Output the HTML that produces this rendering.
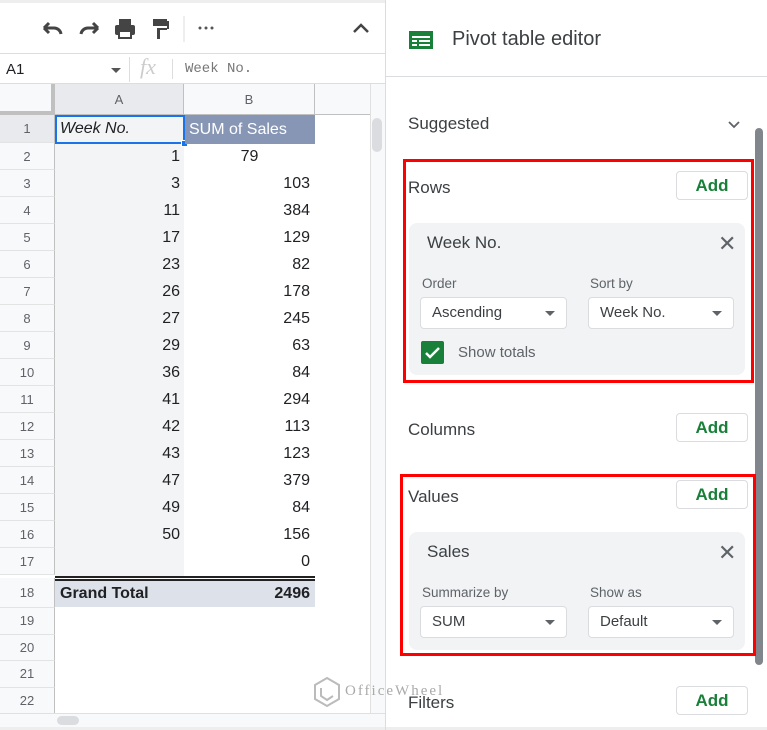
<!DOCTYPE html>
<html><head><meta charset="utf-8"><style>
*{box-sizing:border-box;margin:0;padding:0}
body{width:767px;height:730px;position:relative;overflow:hidden;background:#fff;font-family:"Liberation Sans",Arial,sans-serif;color:#202124}
.a{position:absolute}
.rh{position:absolute;left:0;width:55px;text-align:center;font-size:13px;color:#5f6368;border-bottom:1px solid #e2e3e3;background:#f8f9fa;border-right:1px solid #c0c0c0}
.cell{position:absolute;font-size:16px;display:flex;align-items:center}
.btn{position:absolute;width:72px;height:29px;border:1px solid #dadce0;border-radius:4px;color:#188038;font-size:17px;font-weight:bold;text-align:center;line-height:27px;background:#fff}
.lbl{position:absolute;font-size:17px;color:#3c4043}
.card{position:absolute;left:409px;width:336px;background:#f1f3f4;border-radius:8px}
.sel{position:absolute;height:32px;background:#fff;border:1px solid #dadce0;border-radius:4px;font-size:15px;color:#3c4043;padding-left:11px;line-height:30px}
.sel:after{content:"";position:absolute;right:11px;top:13px;border:5px solid transparent;border-top:5px solid #5f6368}
.sm{position:absolute;font-size:13.5px;color:#5f6368}
.x{position:absolute;font-size:22px;color:#5f6368;font-weight:300}
</style></head><body>
<div class="a" style="left:0;top:0;width:385px;height:3px;background:#eee"></div>
<svg class="a" style="left:38px;top:14px" width="340" height="30" viewBox="0 0 340 30">
<path d="M6 14 l5-5 M6 14 l5 5 M6 14 h10 a7 7 0 0 1 7 6" stroke="#444" stroke-width="3" fill="none"/>
<path d="M60 14 l-5-5 M60 14 l-5 5 M60 14 h-10 a7 7 0 0 0 -7 6" stroke="#444" stroke-width="3" fill="none"/>
<rect x="77" y="11" width="20" height="10" rx="2" fill="#444"/><rect x="81" y="5" width="12" height="6" fill="#444"/><rect x="81" y="17" width="12" height="7" fill="#fff" stroke="#444" stroke-width="2"/>
<rect x="115" y="5" width="14" height="7" fill="#444"/><rect x="129" y="7" width="2" height="8" fill="#444"/><rect x="119" y="14" width="10" height="2" fill="#444"/><rect x="119" y="14" width="3" height="11" fill="#444"/>
<line x1="146" y1="2" x2="146" y2="28" stroke="#ddd"/>
<circle cx="162" cy="14" r="1.5" fill="#555"/><circle cx="168" cy="14" r="1.5" fill="#555"/><circle cx="174" cy="14" r="1.5" fill="#555"/>
<path d="M316 18 l7-7 l7 7" stroke="#444" stroke-width="2.5" fill="none"/>
</svg>
<div class="a" style="left:0;top:53px;width:385px;height:1px;background:#ddd"></div>
<div class="a" style="left:6px;top:61px;font-size:15px">A1</div>
<div class="a" style="left:111px;top:68px;border:5px solid transparent;border-top:5px solid #555"></div>
<div class="a" style="left:129px;top:57px;width:1px;height:25px;background:#ddd"></div>
<div class="a" style="left:140px;top:54px;font-size:22px;font-style:italic;color:#ccc;font-family:'Liberation Serif',serif">fx</div>
<div class="a" style="left:172px;top:59px;width:1px;height:20px;background:#ddd"></div>
<div class="a" style="left:185px;top:61px;font-size:14px;color:#777;font-family:'Liberation Mono',monospace">Week No.</div>
<div class="a" style="left:0;top:83px;width:385px;height:1px;background:#ddd"></div>
<div class="a" style="left:0;top:84px;width:55px;height:31px;background:#f8f9fa;border-right:4px solid #c0c0c0;border-bottom:4px solid #c0c0c0"></div>
<div class="a" style="left:55px;top:84px;width:129px;height:31px;background:#e8eaed;border-right:1px solid #c0c0c0;border-bottom:1px solid #c0c0c0;text-align:center;line-height:31px;font-size:13px;color:#5f6368">A</div>
<div class="a" style="left:184px;top:84px;width:131px;height:31px;background:#f8f9fa;border-right:1px solid #c0c0c0;border-bottom:1px solid #c0c0c0;text-align:center;line-height:31px;font-size:13px;color:#5f6368">B</div>
<div class="a" style="left:315px;top:84px;width:55px;height:31px;background:#f8f9fa;border-bottom:1px solid #c0c0c0"></div>
<div class="a" style="left:370px;top:84px;width:15px;height:630px;background:#f8f9fa;border-left:1px solid #e0e0e0"></div>
<div class="a" style="left:372px;top:118px;width:10px;height:34px;border-radius:5px;background:#dadce0"></div>
<div class="a" style="left:55px;top:115px;width:129px;height:462px;background:#f3f4f6"></div>
<div id="rows"></div>
<div class="a" style="left:55px;top:115px;width:130px;height:29px;border:2px solid #1a73e8;background:#f3f4f6"></div>
<div class="a" style="left:181px;top:140px;width:7px;height:7px;background:#1a73e8;border:1px solid #fff"></div>
<div class="cell" style="left:60px;top:115px;height:28px;font-style:italic">Week No.</div>
<div class="cell" style="left:185px;top:115px;width:130px;height:29px;background:#8796b5;color:#fff;padding-left:4px">SUM of Sales</div>
<div class="a" style="left:55px;top:576px;width:260px;height:5px;border-top:2px solid #222;border-bottom:2px solid #222"></div>
<div class="cell" style="left:55px;top:581px;width:260px;height:26px;background:#dde2ea;font-weight:bold;justify-content:space-between;padding:0 5px">
<span>Grand Total</span><span>2496</span></div>
<div class="a" style="left:0;top:713px;width:385px;height:14px;background:#f8f9fa;border-top:1px solid #e0e0e0"></div>
<div class="a" style="left:57px;top:716px;width:22px;height:9px;border-radius:5px;background:#dadce0"></div>
<div class="a" style="left:0;top:727px;width:767px;height:3px;background:#eee"></div>
<div class="a" style="left:385px;top:0;width:1px;height:730px;background:#dadce0"></div>
<svg class="a" style="left:409px;top:31px" width="24" height="18"><rect width="24" height="18" fill="#188038"/><g fill="#fff"><rect x="3" y="5" width="18" height="2"/><rect x="3" y="9" width="5" height="2"/><rect x="10" y="9" width="11" height="2"/><rect x="3" y="13" width="5" height="2"/><rect x="10" y="13" width="11" height="2"/></g></svg>
<div class="a" style="left:452px;top:28px;font-size:20px;color:#3c4043">Pivot table editor</div>
<div class="a" style="left:386px;top:76px;width:381px;height:1px;background:#dadce0"></div>
<div class="lbl" style="left:408px;top:114px">Suggested</div>
<svg class="a" style="left:727px;top:120px" width="14" height="10"><path d="M2 2l5 5 5-5" stroke="#5f6368" stroke-width="1.8" fill="none"/></svg>
<div class="a" style="left:755px;top:128px;width:8px;height:537px;border-radius:4px;background:#80868b"></div>
<div class="a" style="left:403px;top:159px;width:351px;height:224px;border:3px solid #f00"></div>
<div class="lbl" style="left:408px;top:178px">Rows</div>
<div class="btn" style="left:676px;top:171px">Add</div>
<div class="card" style="top:223px;height:152px"></div>
<div class="lbl" style="left:427px;top:233px;font-size:17px;color:#3c4043">Week No.</div>
<div class="x" style="left:718px;top:231px">✕</div>
<div class="sm" style="left:422px;top:276px">Order</div>
<div class="sm" style="left:590px;top:276px">Sort by</div>
<div class="sel" style="left:420px;top:297px;width:147px">Ascending</div>
<div class="sel" style="left:588px;top:297px;width:146px">Week No.</div>
<div class="a" style="left:421px;top:341px;width:23px;height:23px;background:#188038;border-radius:2px"></div>
<svg class="a" style="left:421px;top:341px" width="23" height="23"><path d="M5 12l4 4 9-9" stroke="#fff" stroke-width="2.5" fill="none"/></svg>
<div class="a" style="left:458px;top:344px;font-size:15px;color:#5f6368">Show totals</div>
<div class="lbl" style="left:408px;top:420px">Columns</div>
<div class="btn" style="left:676px;top:413px">Add</div>
<div class="a" style="left:400px;top:474px;width:356px;height:182px;border:3px solid #f00"></div>
<div class="lbl" style="left:408px;top:487px">Values</div>
<div class="btn" style="left:676px;top:480px">Add</div>
<div class="card" style="top:532px;height:118px"></div>
<div class="lbl" style="left:427px;top:542px">Sales</div>
<div class="x" style="left:718px;top:540px">✕</div>
<div class="sm" style="left:422px;top:585px">Summarize by</div>
<div class="sm" style="left:590px;top:585px">Show as</div>
<div class="sel" style="left:420px;top:606px;width:147px">SUM</div>
<div class="sel" style="left:588px;top:606px;width:146px">Default</div>
<div class="lbl" style="left:408px;top:693px">Filters</div>
<div class="btn" style="left:676px;top:686px">Add</div>
<div class="a" style="left:345px;top:683px;font-size:15px;color:#aaa;letter-spacing:2px;font-family:'Liberation Serif',serif">OfficeWheel</div>
<svg class="a" style="left:312px;top:676px" width="30" height="32"><path d="M15 2l12 7v14l-12 7-12-7V9z" stroke="#bbb" stroke-width="2" fill="none"/><path d="M9 12v8l6 4 6-4" stroke="#bbb" stroke-width="2" fill="none"/></svg>
<script>
(function(){
var v=[["",""],["1","79"],["3","103"],["11","384"],["17","129"],["23","82"],["26","178"],["27","245"],["29","63"],["36","84"],["41","294"],["42","113"],["43","123"],["47","379"],["49","84"],["50","156"],["","0"]];
var h='';
function rt(n){if(n==1)return 115;if(n<=17)return 143+(n-2)*27;if(n==18)return 578;return 608+(n-19)*26.5;}
function ht(n){if(n==1)return 28;if(n<=17)return 27;if(n==18)return 30;return 26.5;}
for(var n=1;n<=22;n++){var t=rt(n),hh=ht(n);
h+='<div class="rh" style="top:'+t+'px;height:'+hh+'px;line-height:'+hh+'px;'+(n==1?'background:#e8eaed':'')+'">'+n+'</div>';
if(n>=2&&n<=17){var r=v[n-1];
h+='<div class="cell" style="left:55px;top:'+t+'px;height:'+hh+'px;width:129px;justify-content:flex-end;padding-right:4px">'+r[0]+'</div>';
h+='<div class="cell" style="left:184px;top:'+t+'px;height:'+hh+'px;width:131px;'+(n==2?'justify-content:center;padding-right:0':'justify-content:flex-end;padding-right:5px')+'">'+r[1]+'</div>';}}
document.getElementById('rows').outerHTML=h;
})();
</script>
</body></html>
